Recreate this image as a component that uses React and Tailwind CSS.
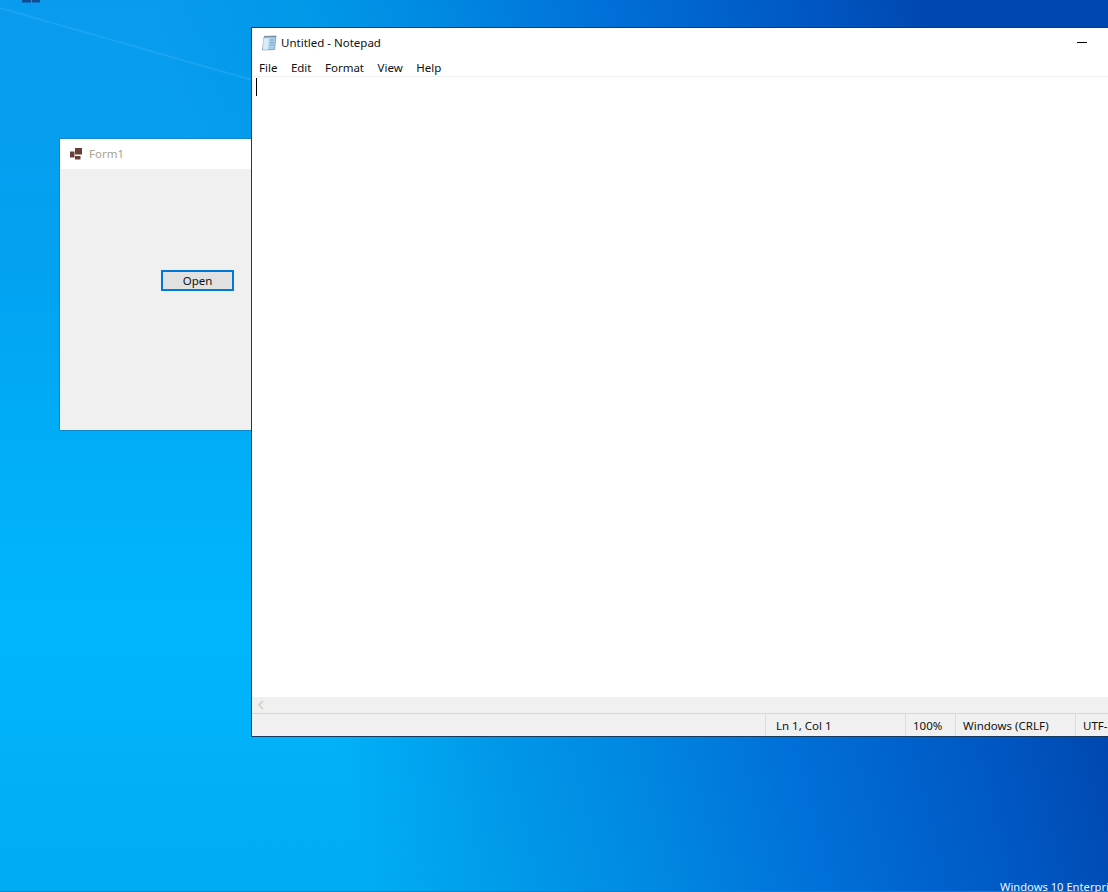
export default function App() {
  return (
    <div className="relative w-[1108px] h-[892px] overflow-hidden font-['Noto_Sans','Open_Sans',sans-serif] text-[11.5px] text-[#111]">
      {/* wallpaper */}
      <div className="absolute inset-0 bg-[linear-gradient(to_bottom,#0a9bee_0%,#02a2f1_30%,#00b0f8_55%,#00b6fd_70%,#00acf3_100%)]" />
      <div className="absolute inset-0 bg-[linear-gradient(76deg,rgba(0,160,240,0)_28%,#0098e8_40%,#0088e2_50%,#0070d8_62%,#0056c2_78%,#0048b0_86%,#0048b0_100%)]" />
      <svg className="absolute inset-0" width="1108" height="892" viewBox="0 0 1108 892" fill="none">
        <path d="M0 8 L252 80" stroke="#2fb0f5" strokeOpacity="0.45" strokeWidth="2" />
        <path d="M22 0 H31 V2.5 H22 Z M32 0 H40 V2.5 H32 Z" fill="#0f4c94" />
      </svg>
      <div className="absolute left-0 right-0 bottom-0 h-px bg-[#0a80d0]" />

      {/* Form1 */}
      <div className="absolute left-[59px] top-[138px] w-[200px] h-[293px] border border-[#1487c9] bg-[#f0f0f0] flex flex-col">
        <div className="h-[30px] bg-white flex items-center pl-[10px] gap-[7px] shrink-0">
          <svg width="12" height="12" viewBox="0 0 12 12">
            <rect x="0" y="3.5" width="4.5" height="6" fill="#6a3e36" />
            <rect x="5" y="0" width="7" height="6.5" fill="#6a3e36" />
            <rect x="5" y="8" width="5.5" height="3.5" fill="#6a3e36" />
          </svg>
          <span className="text-[#a9a18e] leading-none">Form1</span>
        </div>
        <div className="flex-1 pt-[101px] pl-[101px]">
          <button className="w-[73px] h-[21px] border-2 border-[#0078d7] bg-[#e1e1e1] flex items-center justify-center text-[11.5px] text-[#111] leading-none">Open</button>
        </div>
      </div>

      {/* Notepad */}
      <div className="absolute left-[251px] top-[27px] w-[900px] h-[710px] border border-[#173a5c] bg-white flex flex-col">
        <div className="h-[30px] shrink-0 flex items-center pl-[9px] relative">
          <svg width="16" height="16" viewBox="0 0 16 16" className="mr-[4px]">
            <path d="M3 2 L15 1 L13.5 14.5 L1.5 15 Z" fill="#a8cfe8" stroke="#6d8aa0" strokeWidth="0.7" />
            <path d="M2.5 3.5 L8 3 L7 14.5 L2 14.8 Z" fill="#d6ecf8" />
            <path d="M3.5 1.5 H14.5" stroke="#5a6a78" strokeWidth="1.4" strokeDasharray="1 1" />
            <path d="M9 5 H13 M9 7.5 H13 M9 10 H12.5" stroke="#7d99ad" strokeWidth="0.7" />
          </svg>
          <span className="leading-none">Untitled - Notepad</span>
          <div className="absolute left-[825px] top-[14px] w-[10px] h-px bg-black" />
        </div>
        <div className="h-[18px] shrink-0 flex items-center pl-[7px] pt-[2px] gap-[13.5px]">
          <span>File</span>
          <span>Edit</span>
          <span>Format</span>
          <span>View</span>
          <span>Help</span>
        </div>
        <div className="h-px bg-[#f0f0f0] shrink-0" />
        <div className="flex-1 pl-[4px] pt-[1px]">
          <div className="w-px h-[18px] bg-black" />
        </div>
        <div className="h-[16px] shrink-0 bg-[#f0f0f0] flex items-center pl-[5px]">
          <svg width="8" height="10" viewBox="0 0 8 10" fill="none">
            <path d="M6 1 L2 5 L6 9" stroke="#d8d4cc" strokeWidth="2" />
          </svg>
        </div>
        <div className="h-[23px] shrink-0 bg-[#f0f0f0] border-t border-[#d7d7d7] flex">
          <div className="w-[514px] border-r border-[#dcdcdc]" />
          <div className="w-[140px] pl-[10px] pt-[2px] border-r border-[#dcdcdc] flex items-center">Ln 1, Col 1</div>
          <div className="w-[50px] pl-[7px] pt-[2px] border-r border-[#dcdcdc] flex items-center">100%</div>
          <div className="w-[120px] pl-[7px] pt-[2px] border-r border-[#dcdcdc] flex items-center">Windows (CRLF)</div>
          <div className="pl-[7px] pt-[2px] flex items-center">UTF-8</div>
        </div>
      </div>

      <div className="absolute left-[1000px] top-[880px] whitespace-nowrap text-[#eaf4ff] text-[11.2px] leading-[14px]">Windows 10 Enterprise</div>
    </div>
  );
}
